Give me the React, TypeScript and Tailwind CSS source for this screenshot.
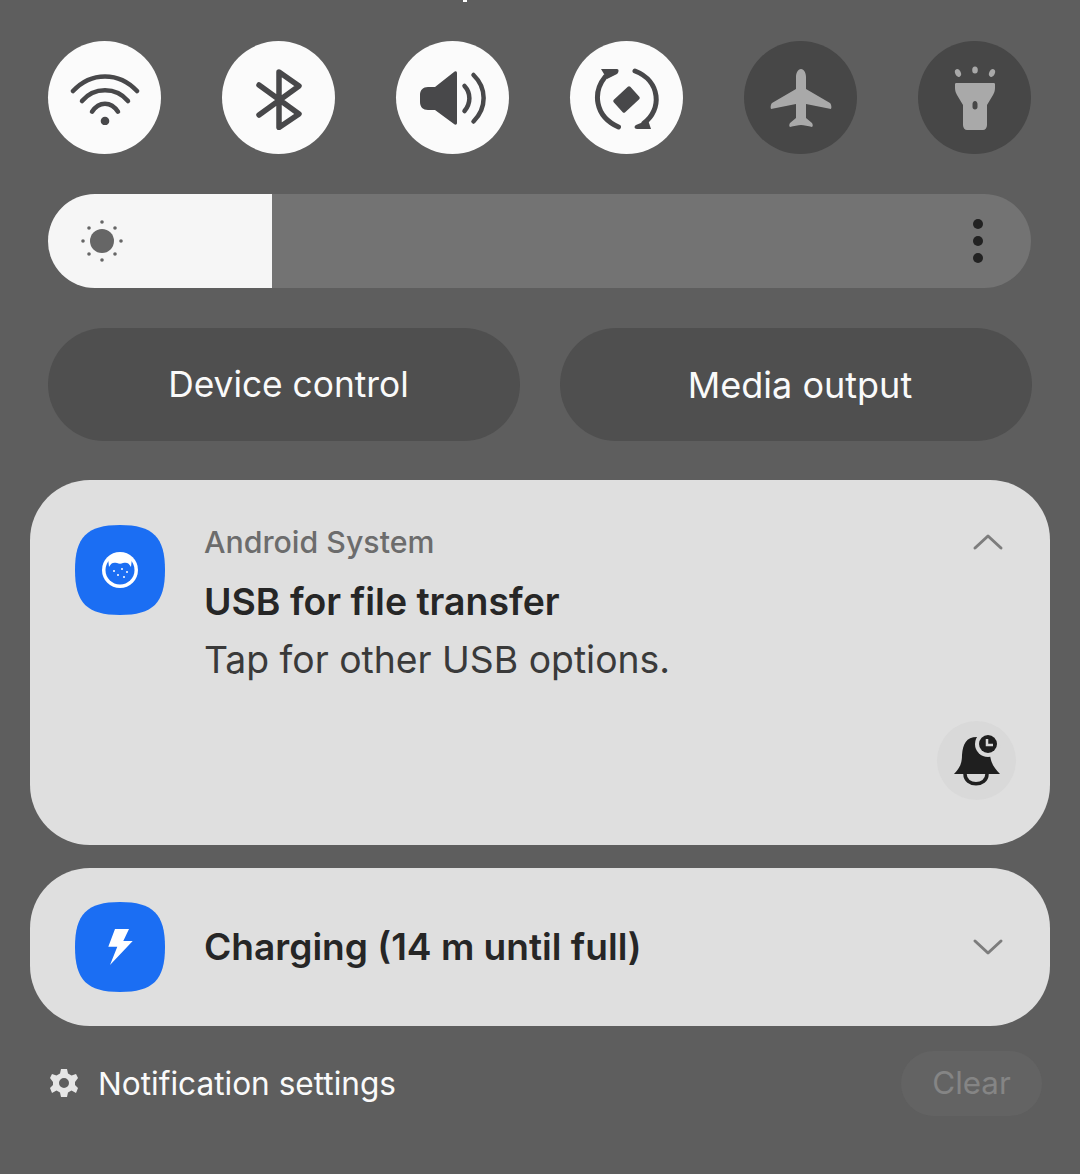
import type { ReactNode } from 'react'

function Round({ dark, children }: { dark?: boolean; children: ReactNode }) {
  return (
    <div className={dark ? 'w-[113px] h-[113px] rounded-full bg-[#474747] flex items-center justify-center' : 'w-[113px] h-[113px] rounded-full bg-[#fbfbfb] flex items-center justify-center'}>
      {children}
    </div>
  )
}

function Squircle({ children }: { children: ReactNode }) {
  return (
    <svg width="90" height="90" viewBox="0 0 90 90" className="shrink-0">
      <path d="M45 0C78 0 90 12 90 45C90 78 78 90 45 90C12 90 0 78 0 45C0 12 12 0 45 0Z" fill="#1b6ef3" />
      {children}
    </svg>
  )
}

function Chevron({ up }: { up?: boolean }) {
  return (
    <svg width="32" height="20" viewBox="0 0 32 20" fill="none" stroke="#7d7d7d" strokeWidth="3" strokeLinecap="round" strokeLinejoin="round">
      <path d={up ? 'M3 16L16 4L29 16' : 'M3 4L16 16L29 4'} />
    </svg>
  )
}

export default function App() {
  return (
    <div className="relative w-[1080px] h-[1174px] overflow-hidden bg-[#5e5e5e] font-['Inter',sans-serif]">
      <div className="absolute left-[463px] top-0 w-[4px] h-[2px] bg-white" />

      <div className="pt-[41px] pl-[48px] pr-[48px]">
        <div className="flex justify-between mr-[1px]">
          <Round>
            <svg width="70" height="54" viewBox="0 0 70 54" fill="none" stroke="#48484a" strokeWidth="4.5" strokeLinecap="round">
              <path d="M3 20C21 0.500 49 0.500 67 20" />
              <path d="M12 30C24 15.700 46 15.700 58 30" />
              <path d="M22 40.700C29 30 41 30 48 40.700" />
              <circle cx="35" cy="50" r="4.300" fill="#48484a" stroke="none" />
            </svg>
          </Round>
          <Round>
            <svg width="46" height="64" viewBox="0 0 46 64" fill="none" stroke="#48484a" strokeWidth="5.500" strokeLinecap="round" strokeLinejoin="round">
              <path d="M3 19L43 48L23 61.500V6L43 20L3 49" />
            </svg>
          </Round>
          <Round>
            <svg width="68" height="54" viewBox="0 0 68 54" fill="none">
              <path d="M1 24C1 19 4 16 9 16H16L35 1C36 0 38 0 38 2V52C38 54 36 54 35 53L16 39H9C4 39 1 36 1 31Z" fill="#48484a" />
              <path d="M45.500 15C52 22 52 32 45.500 40" stroke="#48484a" strokeWidth="4.500" strokeLinecap="round" />
              <path d="M54.500 4C68 17 68 37 54.500 50.500" stroke="#48484a" strokeWidth="4.500" strokeLinecap="round" />
            </svg>
          </Round>
          <Round>
            <svg width="66" height="64" viewBox="0 0 66 64" fill="none">
              <path d="M11 11C-1 26 0 50 24.500 61" stroke="#48484a" strokeWidth="5" strokeLinecap="round" />
              <path d="M41 5C67 15 68 44 50 57" stroke="#48484a" strokeWidth="5" strokeLinecap="round" />
              <path d="M7 3H23C25 3 25 6 23 8L13 13Z" fill="#48484a" />
              <path d="M57 63H43C40 63 40 60 42 59L54 54Z" fill="#48484a" />
              <path d="M35 22L44 32L30 45L21 35Z" fill="#48484a" stroke="#48484a" strokeWidth="3.500" strokeLinejoin="round" />
            </svg>
          </Round>
          <Round dark>
            <svg width="62" height="62" viewBox="0 0 62 62">
              <path d="M31 2C34 2 36 6 36 10V22L60 36C61 37 62 40 61 42L36 37V51L42 56C43 58 43 59 42 60C38 59 34 58 31 58C28 58 24 59 20 60C19 59 19 58 20 56L26 51V37L1 42C0 40 1 37 2 36L26 22V10C26 6 28 2 31 2Z" fill="#a9a9a9" />
            </svg>
          </Round>
          <Round dark>
            <svg width="44" height="64" viewBox="0 0 44 64">
              <ellipse cx="5" cy="7" rx="2.800" ry="4" transform="rotate(-25 5 7)" fill="#a9a9a9" />
              <ellipse cx="22" cy="4" rx="2.800" ry="3.600" fill="#a9a9a9" />
              <ellipse cx="39" cy="7" rx="2.800" ry="4" transform="rotate(25 39 7)" fill="#a9a9a9" />
              <path fillRule="evenodd" d="M3 17H41C42 17 42 18 42 19V22C42 25 41 27 40 29L34 39V59C34 62 32 64 30 64H14C12 64 10 62 10 59V39L4 29C3 27 2 25 2 22V19C2 18 2 17 3 17ZM22 35C20.500 35 19.500 36.500 19.500 38V41C19.500 42.500 20.500 43.500 22 43.500C23.500 43.500 24.500 42.500 24.500 41V38C24.500 36.500 23.500 35 22 35Z" fill="#a9a9a9" />
            </svg>
          </Round>
        </div>

        <div className="mt-[40px] mr-[1px] h-[94px] rounded-full bg-[#737373] overflow-hidden flex items-center">
          <div className="w-[224px] h-full bg-[#f6f6f6] flex items-center pl-[32px]">
            <svg width="44" height="44" viewBox="0 0 44 44" fill="#666666">
              <circle cx="22" cy="22" r="12" />
              <circle cx="22" cy="3" r="1.800" />
              <circle cx="22" cy="41" r="1.800" />
              <circle cx="3" cy="22" r="1.800" />
              <circle cx="41" cy="22" r="1.800" />
              <circle cx="9" cy="9" r="1.800" />
              <circle cx="35" cy="9" r="1.800" />
              <circle cx="9" cy="35" r="1.800" />
              <circle cx="35" cy="35" r="1.800" />
            </svg>
          </div>
          <div className="ml-auto mr-[48px] flex flex-col gap-[7px]">
            <div className="w-[10px] h-[10px] rounded-full bg-[#222222]" />
            <div className="w-[10px] h-[10px] rounded-full bg-[#222222]" />
            <div className="w-[10px] h-[10px] rounded-full bg-[#222222]" />
          </div>
        </div>

        <div className="mt-[40px] flex gap-[40px]">
          <div className="w-[472px] h-[113px] pl-[9px] pt-[2px] rounded-full bg-[#4f4f4f] flex items-center justify-center text-[35.300px] text-[#fafafa]">Device control</div>
          <div className="w-[472px] h-[113px] pl-[8px] pt-[1px] rounded-full bg-[#4f4f4f] flex items-center justify-center text-[36px] text-[#fafafa]">Media output</div>
        </div>
      </div>

      <div className="mt-[39px] mx-[30px] h-[365px] rounded-[60px] bg-[#dfdfdf] relative flex pl-[45px] pt-[45px]">
        <Squircle>
          <circle cx="45" cy="45" r="18" fill="#fff" />
          <circle cx="45" cy="45" r="14.500" fill="#1b6ef3" />
          <path d="M33 33C40 28 50 28 57 33L56 42C54 38 52 37 48 38C46 39 44 39 42 38C38 37 36 38 34 42Z" fill="#fff" />
          <circle cx="39" cy="46" r="1" fill="#fff" />
          <circle cx="47" cy="44" r="1" fill="#fff" />
          <circle cx="43" cy="50" r="1" fill="#fff" />
          <circle cx="52" cy="47" r="1" fill="#fff" />
          <circle cx="49" cy="52" r="1" fill="#fff" />
        </Squircle>
        <div className="ml-[39px] -mt-[1px] flex flex-col">
          <div className="text-[30.300px] leading-[36px] font-medium text-[#6c6c6c]">Android System</div>
          <div className="mt-[20px] text-[37.400px] leading-[44px] font-semibold text-[#262626]">USB for file transfer</div>
          <div className="mt-[14px] text-[37.300px] leading-[44px] text-[#3a3a3a]">Tap for other USB options.</div>
        </div>
        <div className="absolute right-[46px] top-[52px]">
          <Chevron up />
        </div>
        <div className="absolute right-[34px] bottom-[45px] w-[79px] h-[79px] rounded-full bg-[#d9d9d9] flex items-center justify-center">
          <svg width="50" height="52" viewBox="0 0 50 52">
            <path d="M2 39C8 33 10 28 10 20C11 9 14 2 25 2C34 2 37 10 38 20C39 28 42 33 48 39Z" fill="#1f1f1f" />
            <path d="M13 39C13 52 35 52 35 39" fill="none" stroke="#1f1f1f" strokeWidth="3.500" />
            <circle cx="36" cy="9" r="13" fill="#d9d9d9" />
            <circle cx="36" cy="9" r="9" fill="#1f1f1f" />
            <path d="M35 4V10H41" fill="none" stroke="#d9d9d9" strokeWidth="2.500" />
          </svg>
        </div>
      </div>

      <div className="mt-[23px] mx-[30px] h-[158px] rounded-[60px] bg-[#dfdfdf] flex items-center pl-[45px] pr-[46px]">
        <Squircle>
          <path d="M40 27H54L48.300 39H57.700L35 63L42.300 44.700H33.300Z" fill="#fff" />
        </Squircle>
        <div className="ml-[39px] flex-1 text-[37.100px] font-semibold text-[#262626]">Charging (14 m until full)</div>
        <Chevron />
      </div>

      <div className="mt-[25px] pl-[50px] pr-[38px] flex items-center justify-between">
        <div className="flex items-center">
          <svg width="28" height="30" viewBox="0 0 28 30">
            <path fillRule="evenodd" d="M11 1H17L18 5.500L21.500 7.500L26 6L28 10L25 14V17L28 20L26 25L21.500 22.500L18 24.500L17 29H11L10 24.500L6.500 22.500L2 25L0 20L3 17V14L0 10L2 6L6.500 7.500L10 5.500ZM14 10A5 5 0 1 0 14 20A5 5 0 1 0 14 10Z" fill="#e6e6e6" />
          </svg>
          <span className="ml-[20px] pt-[1px] text-[31.600px] text-[#fafafa]">Notification settings</span>
        </div>
        <div className="w-[141px] h-[65px] pt-[1px] rounded-full bg-[#636363] flex items-center justify-center text-[31.400px] text-[#858585]">Clear</div>
      </div>
    </div>
  )
}
